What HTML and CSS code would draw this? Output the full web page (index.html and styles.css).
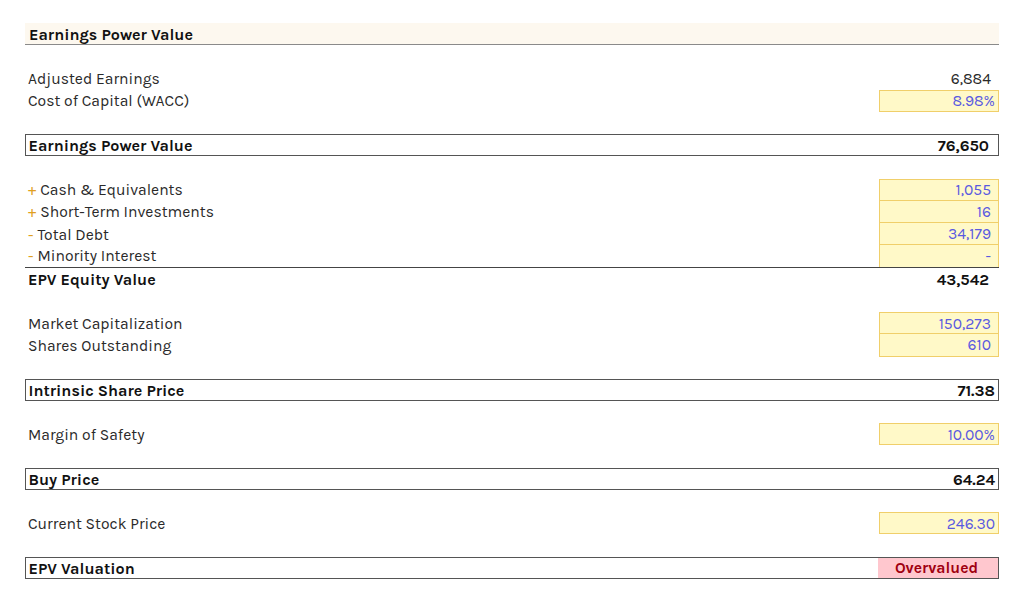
FILE: index.html
```html
<!DOCTYPE html>
<html>
<head>
<meta charset="utf-8">
<link rel="stylesheet" href="styles.css">
</head>
<body>
<div class="sheet">
  <div class="row head"><div class="lbl b">Earnings Power Value</div><div class="val"></div></div>
  <div class="row"></div>
  <div class="row"><div class="lbl">Adjusted Earnings</div><div class="val">6,884</div></div>
  <div class="row"><div class="lbl">Cost of Capital (WACC)</div><div class="val inp solo">8.98%</div></div>
  <div class="row"></div>
  <div class="row box"><div class="lbl b">Earnings Power Value</div><div class="val b pr10">76,650</div></div>
  <div class="row"></div>
  <div class="row"><div class="lbl"><span class="sign">+</span> Cash &amp; Equivalents</div><div class="val inp top">1,055</div></div>
  <div class="row"><div class="lbl"><span class="sign">+</span> Short-Term Investments</div><div class="val inp mid">16</div></div>
  <div class="row"><div class="lbl"><span class="sign">-</span> Total Debt</div><div class="val inp mid">34,179</div></div>
  <div class="row underline"><div class="lbl"><span class="sign">-</span> Minority Interest</div><div class="val inp mid nob">-</div></div>
  <div class="row"><div class="lbl b">EPV Equity Value</div><div class="val b pr10">43,542</div></div>
  <div class="row"></div>
  <div class="row"><div class="lbl">Market Capitalization</div><div class="val inp top">150,273</div></div>
  <div class="row"><div class="lbl">Shares Outstanding</div><div class="val inp mid">610</div></div>
  <div class="row"></div>
  <div class="row box"><div class="lbl b">Intrinsic Share Price</div><div class="val b">71.38</div></div>
  <div class="row"></div>
  <div class="row"><div class="lbl">Margin of Safety</div><div class="val inp solo">10.00%</div></div>
  <div class="row"></div>
  <div class="row box"><div class="lbl b">Buy Price</div><div class="val b">64.24</div></div>
  <div class="row"></div>
  <div class="row"><div class="lbl">Current Stock Price</div><div class="val inp solo">246.30</div></div>
  <div class="row"></div>
  <div class="row box"><div class="lbl b">EPV Valuation</div><div class="val bad">Overvalued</div></div>
</div>
</body>
</html>
```
FILE: styles.css
```css
html, body {
  margin: 0;
  padding: 0;
  background: #ffffff;
}
body {
  font-family: "Karla", "Inter", "Liberation Sans", sans-serif;
  font-size: 15.7px;
  color: #2a2a2a;
}
.sheet {
  padding: 23px 0 0 25px;
  width: 974px;
  display: grid;
  grid-template-columns: 974px;
  grid-auto-rows: 22.24px;
}
.row {
  display: grid;
  grid-template-columns: minmax(0, 1fr) 120px;
  box-sizing: border-box;
  align-items: stretch;
}
.lbl {
  display: flex;
  align-items: center;
  padding-left: 3px;
  padding-top: 1px;
  white-space: nowrap;
}
.val {
  display: flex;
  align-items: center;
  justify-content: flex-end;
  padding-right: 8px;
  padding-top: 1px;
  box-sizing: border-box;
}
.b { font-weight: 700; color: #111111; font-size: 16.1px; }
.pr10 { padding-right: 10px; }
.head {
  background: #fdf8ef;
  border-bottom: 1.5px solid #8a8a8a;
}
.head .lbl { padding-left: 4px; }
.box {
  border: 1.5px solid #555555;
}
.box .lbl { padding-left: 2.5px; }
.box .val { padding-right: 3px; }
.box .val.pr10 { padding-right: 9px; }
.underline { border-bottom: 1.5px solid #444444; }
.inp {
  background: #fff9c8;
  color: #5a5ae0;
  border-left: 1px solid #f0cf6a;
  border-right: 1px solid #f0cf6a;
  padding-right: 7px;
}
.solo { border: 1px solid #f0cf6a; padding-right: 3px; }
.top { border-top: 1px solid #f0cf6a; border-bottom: 1px solid #f0cf6a; }
.mid { border-bottom: 1px solid #f0cf6a; }
.nob { border-bottom: none; }
.sign { color: #e0a020; margin-right: 4px; }
.bad {
  background: #ffc7ce;
  color: #a00010;
  font-weight: 700;
  justify-content: center;
  padding-right: 0;
  padding-left: 0;
}
```
